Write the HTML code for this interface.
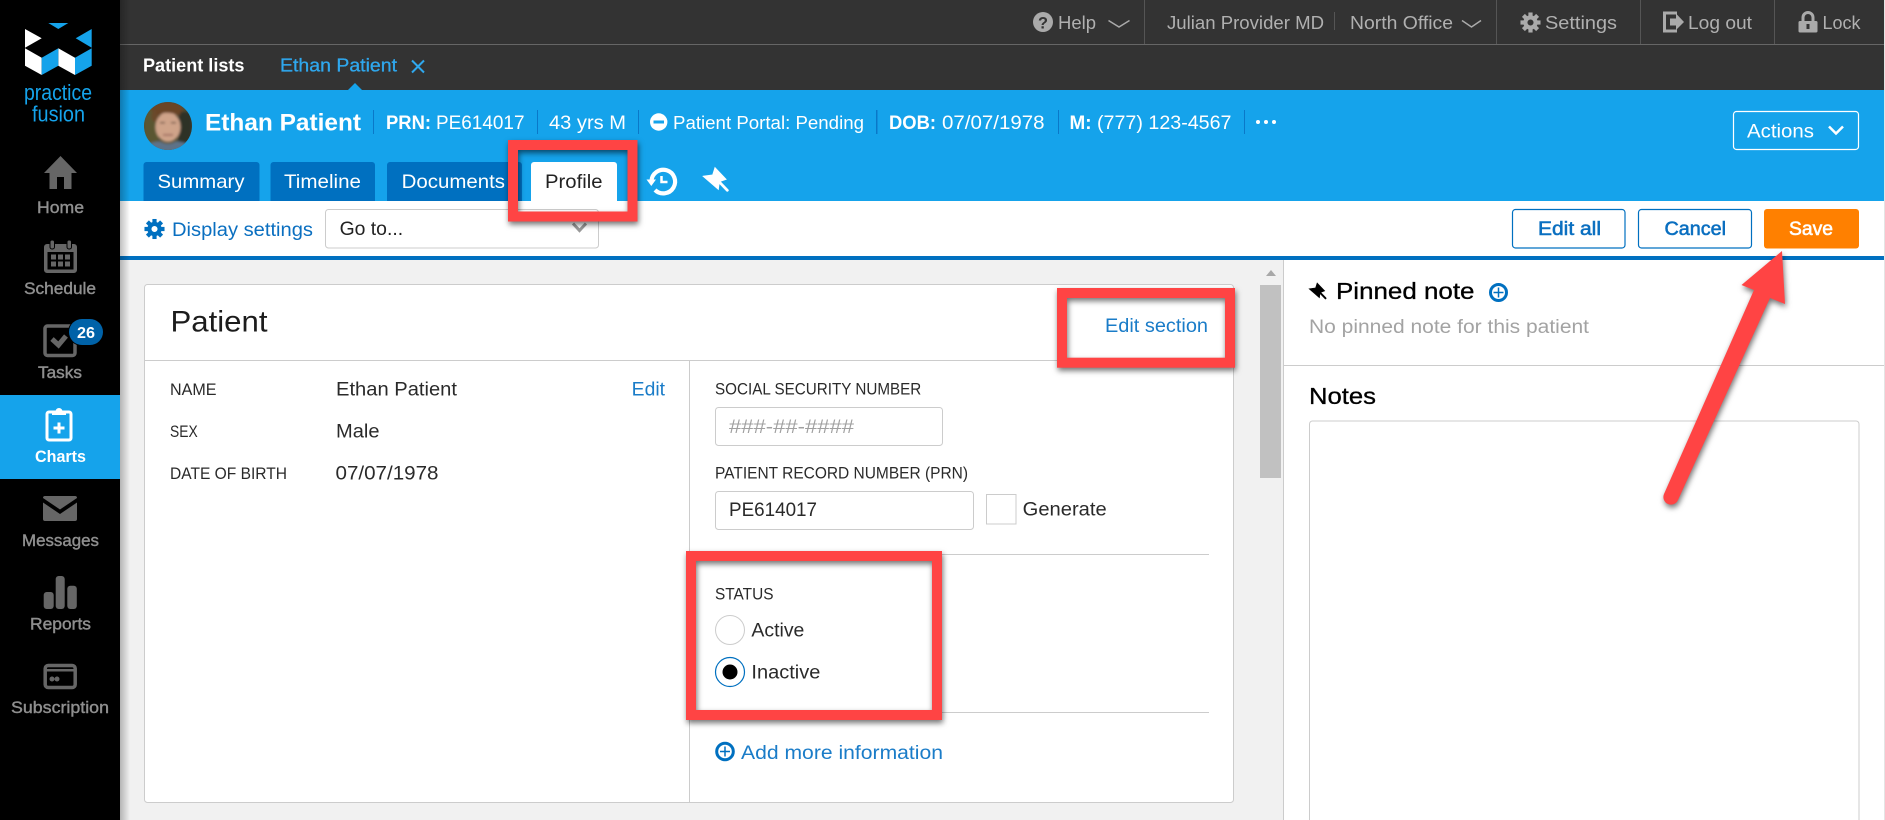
<!DOCTYPE html>
<html lang="en"><head><meta charset="utf-8"><title>Ethan Patient - Profile</title>
<style>
html,body{margin:0;padding:0;background:#fff;width:1885px;height:820px;overflow:hidden}
svg{display:block}
text{font-family:"Liberation Sans",sans-serif;white-space:pre}
.side{font-size:16.5px;fill:#8f8f8f;stroke:#8f8f8f;stroke-width:.4px;text-anchor:start}
.top{font-size:18.5px;fill:#b0b0b0}
.hd{font-size:19px;fill:#fff}
.sb{stroke-width:.55px}
.tab{font-size:19.5px;fill:#fff}
.lab{font-size:17px;fill:#2a2a2a}
.val{font-size:19px;fill:#2a2a2a}
.lnk{font-size:19px;fill:#1a7cc8}
.hl{filter:drop-shadow(1px 3px 3px rgba(0,0,0,.55))}
</style></head><body>
<svg xmlns="http://www.w3.org/2000/svg" width="1885" height="820" viewBox="0 0 1885 820">
<defs>
<linearGradient id="sh" x1="0" x2="1" y1="0" y2="0"><stop offset="0" stop-color="#000" stop-opacity=".25"/><stop offset="1" stop-color="#000" stop-opacity="0"/></linearGradient>
<clipPath id="av"><circle cx="168" cy="126" r="24"/></clipPath>
<filter id="bl" x="-20%" y="-20%" width="140%" height="140%"><feGaussianBlur stdDeviation="1.2"/></filter>
<symbol id="gear" viewBox="-11 -11 22 22" overflow="visible">
<path fill-rule="evenodd" d="M-7.5 0a7.5 7.5 0 1 0 15 0a7.5 7.5 0 1 0 -15 0zM-3.2 0a3.2 3.2 0 1 1 6.4 0a3.2 3.2 0 1 1 -6.4 0z"/>
<g><rect x="-2.2" y="-10.5" width="4.4" height="4"/><rect x="-2.2" y="-10.5" width="4.4" height="4" transform="rotate(45)"/><rect x="-2.2" y="-10.5" width="4.4" height="4" transform="rotate(90)"/><rect x="-2.2" y="-10.5" width="4.4" height="4" transform="rotate(135)"/><rect x="-2.2" y="-10.5" width="4.4" height="4" transform="rotate(180)"/><rect x="-2.2" y="-10.5" width="4.4" height="4" transform="rotate(225)"/><rect x="-2.2" y="-10.5" width="4.4" height="4" transform="rotate(270)"/><rect x="-2.2" y="-10.5" width="4.4" height="4" transform="rotate(315)"/></g>
</symbol>
<g id="pin"><path d="M703.3 176.3L712.7 175L715 167.7L726 179.3L719.3 181.7L718.3 189.3Z"/><path d="M720 182.7L727.3 190.3" stroke-width="2.8" stroke-linecap="round" fill="none"/></g>
</defs>

<!-- backgrounds -->
<rect width="1885" height="820" fill="#f1f1f1"/>
<rect x="120" y="0" width="1765" height="90" fill="#333"/>
<rect x="120" y="44" width="1765" height="1" fill="#666"/>
<rect x="120" y="90" width="1765" height="111" fill="#15a3eb"/>
<path d="M348 90L355 83L362 90Z" fill="#15a3eb"/>

<!-- tabs -->
<g fill="#0070c0">
<rect x="143.500" y="162" width="116" height="45" rx="3"/>
<rect x="270.500" y="162" width="104.500" height="45" rx="3"/>
<rect x="387" y="162" width="135" height="45" rx="3"/>
</g>
<rect x="531" y="162" width="86" height="45" rx="3" fill="#fff"/>
<rect x="120" y="201" width="1765" height="55" fill="#fff"/>
<rect x="120" y="256" width="1765" height="4" fill="#0070c0"/>

<!-- right panel -->
<rect x="1283" y="260" width="602" height="560" fill="#fff"/>
<rect x="1283" y="260" width="1" height="560" fill="#ccc"/>
<rect x="1284" y="365" width="601" height="1" fill="#ccc"/>
<path d="M1309.500 830V424a3 3 0 0 1 3-3H1856a3 3 0 0 1 3 3V830" fill="#fff" stroke="#ccc"/>
<path d="M1271 270L1276 276H1266Z" fill="#a8a8a8"/>
<rect x="1260" y="285" width="21" height="193" fill="#c1c1c1"/>

<!-- card -->
<rect x="144.500" y="284.500" width="1089" height="518" rx="3" fill="#fff" stroke="#ccc"/>
<rect x="145" y="360" width="1088" height="1" fill="#ccc"/>
<rect x="689" y="361" width="1" height="441" fill="#ccc"/>
<rect x="715" y="554" width="494" height="1" fill="#ccc"/>
<rect x="715" y="712" width="494" height="1" fill="#ccc"/>

<!-- sidebar -->
<rect x="120" y="0" width="10" height="820" fill="url(#sh)"/>
<rect x="0" y="0" width="120" height="820" fill="#000"/>
<rect x="0" y="395" width="120" height="84" fill="#15a3eb"/>
<g fill="#fff"><path d="M25 29L41.7 38.3L25 47.7Z"/><path d="M25 48.3L41.7 57.7V75L25 65.7Z"/><path d="M58.3 48.3L75 57.7V75L58.3 65.7Z"/></g>
<g fill="#15a3eb"><path d="M48.3 23H68.3L58.3 29Z"/><path d="M91.7 29L75.7 38.3L91.7 47.7Z"/><path d="M41.7 57.7L58.3 48.3V65.7L41.7 75Z"/><path d="M75 57.7L91.7 48.3V65.7L75 75Z"/></g>
<text x="24" y="100" font-size="22.500" fill="#15a3eb" textLength="68" lengthAdjust="spacingAndGlyphs">practice</text>
<text x="32" y="121.500" font-size="22.500" fill="#15a3eb" textLength="53" lengthAdjust="spacingAndGlyphs">fusion</text>

<path d="M60.5 156L77 173H71.5V189H64V177H57V189H49.5V173H44Z" fill="#666"/>
<text class="side" x="37" y="213" textLength="47" lengthAdjust="spacingAndGlyphs">Home</text>
<g fill="#666"><path fill-rule="evenodd" d="M47 244H74a3 3 0 0 1 3 3V270a3 3 0 0 1-3 3H47a3 3 0 0 1-3-3V247a3 3 0 0 1 3-3zM47.5 252V269.500H73.500V252Z"/>
<rect x="50" y="240" width="4.500" height="9" rx="2" stroke="#000"/><rect x="67" y="240" width="4.500" height="9" rx="2" stroke="#000"/>
<rect x="51" y="254.500" width="5" height="5"/><rect x="58" y="254.500" width="5" height="5"/><rect x="65" y="254.500" width="5" height="5"/><rect x="51" y="261.500" width="5" height="5"/><rect x="58" y="261.500" width="5" height="5"/><rect x="65" y="261.500" width="5" height="5"/></g>
<text class="side" x="24" y="294" textLength="72" lengthAdjust="spacingAndGlyphs">Schedule</text>
<rect x="45" y="326" width="30" height="29.500" rx="2.500" fill="none" stroke="#666" stroke-width="3.500"/>
<path d="M52 339L58.500 345L66 336" fill="none" stroke="#666" stroke-width="5"/>
<rect x="68" y="318" width="36" height="28" rx="14" fill="#000"/>
<rect x="69" y="319" width="34" height="26" rx="13" fill="#0062a8"/>
<text x="77" y="338" font-size="16" font-weight="700" fill="#fff" textLength="18" lengthAdjust="spacingAndGlyphs">26</text>
<text class="side" x="38" y="378" textLength="44" lengthAdjust="spacingAndGlyphs">Tasks</text>
<rect x="47" y="412" width="24" height="28" rx="2" fill="none" stroke="#fff" stroke-width="3"/>
<path d="M52 411.500H55.500a3.500 3.500 0 0 1 7 0H66V415H52Z" fill="#fff"/>
<path d="M59 422.500V433.500M53.500 428H64.500" stroke="#fff" stroke-width="3"/>
<text x="35" y="462" font-size="16.500" font-weight="700" fill="#fff" textLength="51" lengthAdjust="spacingAndGlyphs">Charts</text>
<path d="M45 496H75a2 2 0 0 1 2 2L60 509.500L43 498a2 2 0 0 1 2-2Z" fill="#666"/>
<path d="M43 502.500L60 514L77 502.500V519a2 2 0 0 1-2 2H45a2 2 0 0 1-2-2Z" fill="#666"/>
<text class="side" x="22" y="546" textLength="77" lengthAdjust="spacingAndGlyphs">Messages</text>
<g fill="#666"><rect x="43.700" y="592" width="10" height="17" rx="3"/><rect x="55.700" y="576" width="9" height="33" rx="3"/><rect x="67.300" y="585.700" width="9.500" height="23.300" rx="3"/></g>
<text class="side" x="30" y="629.500" textLength="61" lengthAdjust="spacingAndGlyphs">Reports</text>
<rect x="45.200" y="665.500" width="30" height="22" rx="3" fill="none" stroke="#666" stroke-width="3.500"/>
<rect x="45" y="669" width="30" height="2.500" fill="#666"/>
<circle cx="52" cy="679" r="2.500" fill="#666"/><circle cx="57" cy="679" r="2.500" fill="#666"/>
<text class="side" x="11" y="713" textLength="98" lengthAdjust="spacingAndGlyphs">Subscription</text>

<!-- top bar -->
<g fill="#555"><rect x="1144" y="0" width="1" height="44"/><rect x="1496" y="0" width="1" height="44"/><rect x="1640" y="0" width="1" height="44"/><rect x="1774" y="0" width="1" height="44"/><rect x="1334" y="12" width="1" height="18"/></g>
<circle cx="1043" cy="22" r="10" fill="#aaa"/>
<text x="1038" y="28.500" font-size="17" font-weight="700" fill="#333" textLength="10" lengthAdjust="spacingAndGlyphs">?</text>
<text class="top" x="1058" y="29" textLength="38" lengthAdjust="spacingAndGlyphs">Help</text>
<path d="M1108.500 20.500L1119 27L1129.500 20.500" fill="none" stroke="#aaa" stroke-width="1.500"/>
<text class="top" x="1167" y="29" textLength="157" lengthAdjust="spacingAndGlyphs">Julian Provider MD</text>
<text class="top" x="1350" y="29" textLength="103" lengthAdjust="spacingAndGlyphs">North Office</text>
<path d="M1462 20.500L1471.500 27L1481 20.500" fill="none" stroke="#aaa" stroke-width="1.500"/>
<use href="#gear" x="1520" y="12" width="21" height="21" fill="#aaa"/>
<text class="top" x="1545" y="29" textLength="72" lengthAdjust="spacingAndGlyphs">Settings</text>
<path d="M1677 13H1664.500V31H1677" fill="none" stroke="#aaa" stroke-width="3"/>
<path d="M1670 18.500H1676V13.500L1684 22L1676 30V25.500H1670Z" fill="#aaa"/>
<text class="top" x="1688" y="29" textLength="64" lengthAdjust="spacingAndGlyphs">Log out</text>
<path d="M1803 21V17.500a5 5 0 0 1 10 0V21" fill="none" stroke="#aaa" stroke-width="3"/>
<rect x="1798.500" y="21" width="19" height="11.500" rx="1.500" fill="#aaa"/>
<rect x="1806.500" y="24" width="3" height="5" fill="#333"/>
<text class="top" x="1822.500" y="29" textLength="38" lengthAdjust="spacingAndGlyphs">Lock</text>

<!-- second row -->
<text x="143" y="71.500" font-size="18.500" font-weight="700" fill="#fff" textLength="101.500" lengthAdjust="spacingAndGlyphs">Patient lists</text>
<text x="280" y="71.500" font-size="18.500" fill="#2fa8ee" stroke="#2fa8ee" stroke-width=".3" textLength="117" lengthAdjust="spacingAndGlyphs">Ethan Patient</text>
<path d="M412 60.500L424 72.500M424 60.500L412 72.500" stroke="#2fa8ee" stroke-width="2" fill="none"/>

<!-- patient header -->
<g clip-path="url(#av)">
<rect x="144" y="102" width="48" height="48" fill="#4e4a30"/>
<g filter="url(#bl)">
<rect x="144" y="108" width="14" height="36" fill="#5a5630"/>
<rect x="178" y="112" width="14" height="34" fill="#2f3028"/>
<ellipse cx="167" cy="109" rx="16" ry="7" fill="#6a4528"/>
<ellipse cx="155" cy="116" rx="3.500" ry="6" fill="#6a4a2c"/>
<ellipse cx="168" cy="127" rx="12.500" ry="15" fill="#cfa389"/>
<path d="M156 115Q168 110 180 116L180 111Q168 104 156 109Z" fill="#6a4528"/>
<rect x="160" y="122" width="5" height="1.500" fill="#6d5243"/><rect x="171" y="122" width="5" height="1.500" fill="#6d5243"/>
<rect x="163" y="134" width="10" height="1.800" fill="#a06e60"/>
<path d="M146 152L150 143L160 141Q168 146 176 141L186 143L190 152Z" fill="#5d7288"/>
</g></g>
<text x="205" y="130.500" font-size="24.500" font-weight="700" fill="#fff" textLength="156" lengthAdjust="spacingAndGlyphs">Ethan Patient</text>
<g fill="#0a78c8"><rect x="373" y="110" width="1" height="24"/><rect x="537" y="110" width="1" height="24"/><rect x="638" y="110" width="1" height="24"/><rect x="876" y="110" width="1.500" height="24"/><rect x="1058" y="110" width="1" height="24"/><rect x="1244" y="110" width="1" height="24"/></g>
<text class="hd" x="386" y="129" font-weight="700" textLength="45" lengthAdjust="spacingAndGlyphs">PRN:</text>
<text class="hd" x="436" y="129" textLength="88.500" lengthAdjust="spacingAndGlyphs">PE614017</text>
<text class="hd" x="549" y="129" textLength="77" lengthAdjust="spacingAndGlyphs">43 yrs M</text>
<circle cx="658.700" cy="122" r="8.700" fill="#fff"/><rect x="653.500" y="120.500" width="10.500" height="3" fill="#15a3eb"/>
<text x="673" y="129" font-size="18.500" fill="#fff" textLength="191" lengthAdjust="spacingAndGlyphs">Patient Portal: Pending</text>
<text class="hd" x="889" y="129" font-weight="700" textLength="47" lengthAdjust="spacingAndGlyphs">DOB:</text>
<text class="hd" x="942" y="129" textLength="102.500" lengthAdjust="spacingAndGlyphs">07/07/1978</text>
<text class="hd" x="1069.500" y="129" font-weight="700" textLength="22" lengthAdjust="spacingAndGlyphs">M:</text>
<text class="hd" x="1097" y="129" textLength="134.500" lengthAdjust="spacingAndGlyphs">(777) 123-4567</text>
<circle cx="1258" cy="122" r="2" fill="#fff"/><circle cx="1266" cy="122" r="2" fill="#fff"/><circle cx="1274" cy="122" r="2" fill="#fff"/>
<rect x="1733.500" y="111.500" width="125" height="38" rx="3" fill="none" stroke="#fff" stroke-width="1.200"/>
<text x="1747" y="137.500" font-size="19.500" fill="#fff" textLength="67" lengthAdjust="spacingAndGlyphs">Actions</text>
<path d="M1829 126.500L1836 133.500L1843 126.500" fill="none" stroke="#fff" stroke-width="2.500"/>

<!-- tab labels -->
<text class="tab" x="157.500" y="188" textLength="87" lengthAdjust="spacingAndGlyphs">Summary</text>
<text class="tab" x="284" y="188" textLength="77" lengthAdjust="spacingAndGlyphs">Timeline</text>
<text class="tab" x="401.600" y="188" textLength="103.400" lengthAdjust="spacingAndGlyphs">Documents</text>
<text x="545" y="188" font-size="19.500" fill="#222" textLength="57.500" lengthAdjust="spacingAndGlyphs">Profile</text>
<path d="M651.500 181A11.800 11.800 0 1 1 655 190" fill="none" stroke="#fff" stroke-width="4.200"/>
<path d="M646.500 179.500H656L651.300 186Z" fill="#fff"/>
<path d="M661.500 176V182H667.500" fill="none" stroke="#fff" stroke-width="2.500"/>
<use href="#pin" fill="#fff" stroke="#fff"/>

<!-- toolbar -->
<use href="#gear" x="144" y="218.500" width="21" height="21" fill="#0070c0"/>
<text x="172" y="236" font-size="19" fill="#0a6fc0" textLength="141" lengthAdjust="spacingAndGlyphs">Display settings</text>
<rect x="325.500" y="209.500" width="273" height="38.500" rx="3" fill="#fff" stroke="#ccc"/>
<text x="339.600" y="235" font-size="19" fill="#222" textLength="63.500" lengthAdjust="spacingAndGlyphs">Go to...</text>
<path d="M573 223.500L579.500 230.500L586 223.500" fill="none" stroke="#999" stroke-width="3"/>
<rect x="1512.500" y="209.500" width="112.500" height="38.500" rx="3" fill="#fff" stroke="#0070c0" stroke-width="1.200"/>
<text class="sb" x="1538" y="235" font-size="19" fill="#0a6fc0" stroke="#0a6fc0" textLength="63" lengthAdjust="spacingAndGlyphs">Edit all</text>
<rect x="1638.500" y="209.500" width="113" height="38.500" rx="3" fill="#fff" stroke="#0070c0" stroke-width="1.200"/>
<text class="sb" x="1664.500" y="235" font-size="19" fill="#0a6fc0" stroke="#0a6fc0" textLength="61.500" lengthAdjust="spacingAndGlyphs">Cancel</text>
<rect x="1764" y="209" width="95" height="39.500" rx="3" fill="#ff8000"/>
<text class="sb" x="1789" y="235" font-size="19" fill="#fff" stroke="#fff" textLength="44" lengthAdjust="spacingAndGlyphs">Save</text>

<!-- card content -->
<text x="170.500" y="331.500" font-size="30" fill="#1c1c1c" textLength="97" lengthAdjust="spacingAndGlyphs">Patient</text>
<text class="lnk" x="1105" y="332" textLength="103" lengthAdjust="spacingAndGlyphs">Edit section</text>
<text class="lab" x="170" y="395" textLength="46.500" lengthAdjust="spacingAndGlyphs">NAME</text>
<text class="lab" x="170" y="437" textLength="27.700" lengthAdjust="spacingAndGlyphs">SEX</text>
<text class="lab" x="170" y="479" textLength="117" lengthAdjust="spacingAndGlyphs">DATE OF BIRTH</text>
<text class="val" x="336" y="395.500" textLength="121" lengthAdjust="spacingAndGlyphs">Ethan Patient</text>
<text class="val" x="336" y="437.500" textLength="43.500" lengthAdjust="spacingAndGlyphs">Male</text>
<text class="val" x="335.500" y="479.500" textLength="103" lengthAdjust="spacingAndGlyphs">07/07/1978</text>
<text class="lnk" x="631.700" y="395.500" textLength="33.300" lengthAdjust="spacingAndGlyphs">Edit</text>

<text class="lab" x="715" y="394.500" textLength="206.300" lengthAdjust="spacingAndGlyphs">SOCIAL SECURITY NUMBER</text>
<rect x="715.500" y="407.500" width="227" height="38" rx="3" fill="#fff" stroke="#ccc"/>
<text x="729" y="433" font-size="19" fill="#a0a0a0" textLength="125" lengthAdjust="spacingAndGlyphs">###-##-####</text>
<text class="lab" x="715" y="478.500" textLength="253" lengthAdjust="spacingAndGlyphs">PATIENT RECORD NUMBER (PRN)</text>
<rect x="715.500" y="491.500" width="258" height="38" rx="3" fill="#fff" stroke="#ccc"/>
<text class="val" x="729" y="516" textLength="88" lengthAdjust="spacingAndGlyphs">PE614017</text>
<rect x="986.500" y="494.500" width="29.500" height="29.500" fill="#fff" stroke="#ccc"/>
<text class="val" x="1022.700" y="515.500" textLength="84" lengthAdjust="spacingAndGlyphs">Generate</text>

<text class="lab" x="715" y="599.500" textLength="58.500" lengthAdjust="spacingAndGlyphs">STATUS</text>
<circle cx="730" cy="630" r="14.500" fill="#fff" stroke="#ccc"/>
<text class="val" x="751.400" y="636.500" textLength="53" lengthAdjust="spacingAndGlyphs">Active</text>
<circle cx="730" cy="672" r="14.500" fill="#fff" stroke="#0070c0" stroke-width="1.200"/>
<circle cx="730" cy="672" r="7.500" fill="#000"/>
<text class="val" x="751.400" y="678.500" textLength="69" lengthAdjust="spacingAndGlyphs">Inactive</text>
<circle cx="725" cy="751.500" r="8.300" fill="#fff" stroke="#0070c0" stroke-width="3"/>
<path d="M725 746.500V756.500M720 751.500H730" stroke="#0070c0" stroke-width="1.500"/>
<text class="lnk" x="741" y="759" textLength="202" lengthAdjust="spacingAndGlyphs">Add more information</text>

<!-- right panel text -->
<use href="#pin" fill="#000" stroke="#000" transform="translate(1309 282.500) scale(.68) translate(-703 -167)"/>
<text x="1336" y="299" font-size="23" fill="#000" stroke="#000" stroke-width=".3" textLength="138.500" lengthAdjust="spacingAndGlyphs">Pinned note</text>
<circle cx="1498.500" cy="292.500" r="8" fill="#fff" stroke="#0070c0" stroke-width="3"/>
<path d="M1498.500 287.500V297.500M1493.500 292.500H1503.500" stroke="#0070c0" stroke-width="1.500"/>
<text x="1309" y="333" font-size="19" fill="#a3a3a3" textLength="280" lengthAdjust="spacingAndGlyphs">No pinned note for this patient</text>
<text x="1309" y="404" font-size="23" fill="#000" stroke="#000" stroke-width=".3" textLength="67" lengthAdjust="spacingAndGlyphs">Notes</text>

<!-- annotations -->
<g class="hl" fill="none" stroke="#ff4444" stroke-width="10">
<rect x="513" y="145" width="119.500" height="71.500"/>
<rect x="1062" y="293" width="168" height="69.700"/>
<rect x="691" y="556" width="246" height="159"/>
</g>
<g class="hl" fill="#ff4444">
<path d="M1782 251L1785 304L1770 298L1678 500a7.500 7.500 0 0 1-14-6L1754 290L1741.500 285Z"/>
</g>

<rect x="1884" y="0" width="1" height="820" fill="#e4e4e4"/>
</svg>
</body></html>
